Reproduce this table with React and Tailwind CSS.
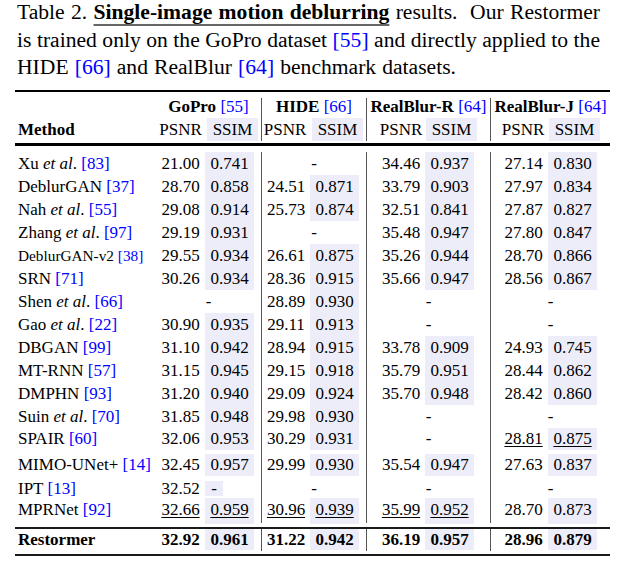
import React from "react";

const C = ({ n }) => <span className="text-[#0000ff] font-normal">[{n}]</span>;
const EA = () => (
  <>
    <i>et al</i>.
  </>
);

const GW = {
  G: { pre: "", p: "w-[49px]", s: "w-[49px]", post: "w-[7px]", all: "w-[105px]" },
  H: { pre: "", p: "w-[48px]", s: "w-[49px]", post: "w-[7px]", all: "w-[104px]" },
  R: { pre: "w-[10px]", p: "w-[48px]", s: "w-[49px]", post: "w-[16px]", all: "w-[123px]" },
  J: { pre: "w-[8px]", p: "w-[49px]", s: "w-[49px]", post: "w-[13px]", all: "w-[119px]" },
};

const ROWGEO = {
  n: { row: "h-[23px]", box: "h-[23px]", align: "items-center", sep: "h-[23px]" },
  spair: { row: "h-[24px]", box: "h-[22px]", align: "items-center", sep: "h-[24px]" },
  mimo: { row: "h-[26px]", box: "mt-[2px] h-[22px]", align: "items-center", sep: "h-[26px]" },
  ipt: { row: "h-[19px]", box: "mt-[3px] h-[15px]", align: "items-center", sep: "h-[19px]" },
  mpr: { row: "h-[30px]", box: "mt-[1px] h-[26px]", align: "items-start", sep: "h-[26px]" },
  best: { row: "h-[25px]", box: "h-[21px]", align: "items-center", sep: "h-[22px]" },
};

const V = ({ v }) =>
  Array.isArray(v) ? (
    <span className="underline decoration-1 underline-offset-[2px]">{v[1]}</span>
  ) : (
    v
  );

const LINE = "leading-[23px] whitespace-nowrap";

function Group({ g, val, geo }) {
  const w = GW[g];
  if (val === "-")
    return (
      <div className={`${w.all} shrink-0`}>
        <div className={`flex justify-center ${geo.box} ${geo.align} ${LINE}`}>-</div>
      </div>
    );
  const [p, s] = val;
  return (
    <div className={`${w.all} shrink-0 flex items-start`}>
      {w.pre && <div className={`${w.pre} shrink-0`} />}
      <div className={`${w.p} shrink-0 flex justify-center ${geo.box} ${geo.align} ${LINE}`}>
        <V v={p} />
      </div>
      {s === "D" ? (
        <div className={`${w.s} shrink-0`}>
          <div className={`w-[18px] flex justify-center bg-[#ededfa] ${geo.box} ${geo.align} ${LINE}`}>-</div>
        </div>
      ) : (
        <div className={`${w.s} shrink-0 flex justify-center bg-[#ededfa] ${geo.box} ${geo.align} ${LINE}`}>
          <V v={s} />
        </div>
      )}
      <div className={`${w.post} shrink-0`} />
    </div>
  );
}

const Sep = ({ cls }) => <div className={`w-px shrink-0 bg-[#555] ${cls}`} />;

const ROWS = [
  { m: <>Xu <EA /> <C n={83} /></>, g: ["21.00", "0.741"], h: "-", r: ["34.46", "0.937"], j: ["27.14", "0.830"] },
  { m: <>DeblurGAN <C n={37} /></>, g: ["28.70", "0.858"], h: ["24.51", "0.871"], r: ["33.79", "0.903"], j: ["27.97", "0.834"] },
  { m: <>Nah <EA /> <C n={55} /></>, g: ["29.08", "0.914"], h: ["25.73", "0.874"], r: ["32.51", "0.841"], j: ["27.87", "0.827"] },
  { m: <>Zhang <EA /> <C n={97} /></>, g: ["29.19", "0.931"], h: "-", r: ["35.48", "0.947"], j: ["27.80", "0.847"] },
  { m: <>DeblurGAN-v2 <C n={38} /></>, small: true, g: ["29.55", "0.934"], h: ["26.61", "0.875"], r: ["35.26", "0.944"], j: ["28.70", "0.866"] },
  { m: <>SRN <C n={71} /></>, g: ["30.26", "0.934"], h: ["28.36", "0.915"], r: ["35.66", "0.947"], j: ["28.56", "0.867"] },
  { m: <>Shen <EA /> <C n={66} /></>, g: "-", h: ["28.89", "0.930"], r: "-", j: "-" },
  { m: <>Gao <EA /> <C n={22} /></>, g: ["30.90", "0.935"], h: ["29.11", "0.913"], r: "-", j: "-" },
  { m: <>DBGAN <C n={99} /></>, g: ["31.10", "0.942"], h: ["28.94", "0.915"], r: ["33.78", "0.909"], j: ["24.93", "0.745"] },
  { m: <>MT-RNN <C n={57} /></>, g: ["31.15", "0.945"], h: ["29.15", "0.918"], r: ["35.79", "0.951"], j: ["28.44", "0.862"] },
  { m: <>DMPHN <C n={93} /></>, g: ["31.20", "0.940"], h: ["29.09", "0.924"], r: ["35.70", "0.948"], j: ["28.42", "0.860"] },
  { m: <>Suin <EA /> <C n={70} /></>, g: ["31.85", "0.948"], h: ["29.98", "0.930"], r: "-", j: "-" },
  { t: "spair", m: <>SPAIR <C n={60} /></>, g: ["32.06", "0.953"], h: ["30.29", "0.931"], r: "-", j: [["u", "28.81"], ["u", "0.875"]] },
  { t: "mimo", m: <>MIMO-UNet+ <C n={14} /></>, g: ["32.45", "0.957"], h: ["29.99", "0.930"], r: ["35.54", "0.947"], j: ["27.63", "0.837"] },
  { t: "ipt", m: <>IPT <C n={13} /></>, g: ["32.52", "D"], h: "-", r: "-", j: "-" },
  { t: "mpr", m: <>MPRNet <C n={92} /></>, g: [["u", "32.66"], ["u", "0.959"]], h: [["u", "30.96"], ["u", "0.939"]], r: [["u", "35.99"], ["u", "0.952"]], j: ["28.70", "0.873"] },
];

const BEST = { t: "best", m: <>Restormer</>, g: ["32.92", "0.961"], h: ["31.22", "0.942"], r: ["36.19", "0.957"], j: ["28.96", "0.879"] };

function BodyRow({ r }) {
  const geo = ROWGEO[r.t || "n"];
  return (
    <div className={`flex items-start ${geo.row} ${r.t === "best" ? "font-bold" : ""}`}>
      <div className={`w-[141px] shrink-0 pl-[3px] flex ${geo.box} ${geo.align} ${LINE} ${r.small ? "text-[15.3px]" : ""}`}>
        <span>{r.m}</span>
      </div>
      <Group g="G" val={r.g} geo={geo} />
      <Sep cls={geo.sep} />
      <Group g="H" val={r.h} geo={geo} />
      <Sep cls={geo.sep} />
      <Group g="R" val={r.r} geo={geo} />
      <Sep cls={geo.sep} />
      <Group g="J" val={r.j} geo={geo} />
    </div>
  );
}

export default function App() {
  return (
    <div
      className="w-[631px] h-[566px] bg-white text-black overflow-hidden"
      style={{ fontFamily: '"Liberation Serif", "Times New Roman", serif' }}
    >
      {/* Caption */}
      <div className="ml-[17px] w-[583px] mt-[-1px] text-[21.6px] leading-[27.5px]">
        <div className="text-justify [text-align-last:justify]">
          Table 2.{" "}
          <span className="font-bold underline decoration-[#666] decoration-2 underline-offset-[5px]">
            Single-image motion deblurring
          </span>{" "}
          results.&nbsp; Our Restormer
        </div>
        <div className="text-justify [text-align-last:justify]">
          is trained only on the GoPro dataset <C n={55} /> and directly applied to the
        </div>
        <div className="[word-spacing:0.7px]">
          HIDE <C n={66} /> and RealBlur <C n={64} /> benchmark datasets.
        </div>
      </div>

      {/* Table */}
      <div className="ml-[15px] w-[595px] mt-[8px] text-[17px]">
        <div className="h-[2px] bg-black" />

        {/* Header row 1 */}
        <div className="mt-[3px] flex items-start h-[23px] leading-[23px] whitespace-nowrap">
          <div className="w-[141px] shrink-0" />
          <div className="w-[105px] shrink-0 text-center">
            <span className="font-bold">GoPro</span> <C n={55} />
          </div>
          <Sep cls="mt-[3px] h-[20px]" />
          <div className="w-[104px] shrink-0 text-center">
            <span className="font-bold">HIDE</span> <C n={66} />
          </div>
          <Sep cls="mt-[3px] h-[20px]" />
          <div className="w-[123px] shrink-0 text-center">
            <span className="font-bold">RealBlur-R</span> <C n={64} />
          </div>
          <Sep cls="mt-[3px] h-[20px]" />
          <div className="w-[119px] shrink-0 text-center">
            <span className="font-bold">RealBlur-J</span> <C n={64} />
          </div>
        </div>

        {/* Header row 2 */}
        <div className="flex items-start h-[23px] leading-[23px] whitespace-nowrap">
          <div className="w-[141px] shrink-0 pl-[3px] font-bold">Method</div>
          <div className="w-[49px] shrink-0 text-center">PSNR</div>
          <div className="ml-[2px] w-[51px] shrink-0 text-center bg-[#ededfa]">SSIM</div>
          <div className="w-[3px] shrink-0" />
          <Sep cls="h-[23px]" />
          <div className="w-[46px] shrink-0 text-center">PSNR</div>
          <div className="ml-[4px] w-[51px] shrink-0 text-center bg-[#ededfa]">SSIM</div>
          <div className="w-[3px] shrink-0" />
          <Sep cls="h-[23px]" />
          <div className="w-[10px] shrink-0" />
          <div className="w-[48px] shrink-0 text-center">PSNR</div>
          <div className="ml-[1px] w-[51px] shrink-0 text-center bg-[#ededfa]">SSIM</div>
          <div className="w-[13px] shrink-0" />
          <Sep cls="h-[23px]" />
          <div className="w-[8px] shrink-0" />
          <div className="w-[48px] shrink-0 text-center">PSNR</div>
          <div className="ml-[2px] w-[51px] shrink-0 text-center bg-[#ededfa]">SSIM</div>
          <div className="w-[10px] shrink-0" />
        </div>

        <div className="mt-[2px] h-[3px] bg-black" />

        {/* Body */}
        <div className="mt-[6px]">
          {ROWS.map((r, i) => (
            <BodyRow key={i} r={r} />
          ))}
        </div>

        <div className="h-[2px] bg-[#1a1a1a]" />
        <BodyRow r={BEST} />
        <div className="h-[2px] bg-[#1a1a1a]" />
      </div>
    </div>
  );
}
